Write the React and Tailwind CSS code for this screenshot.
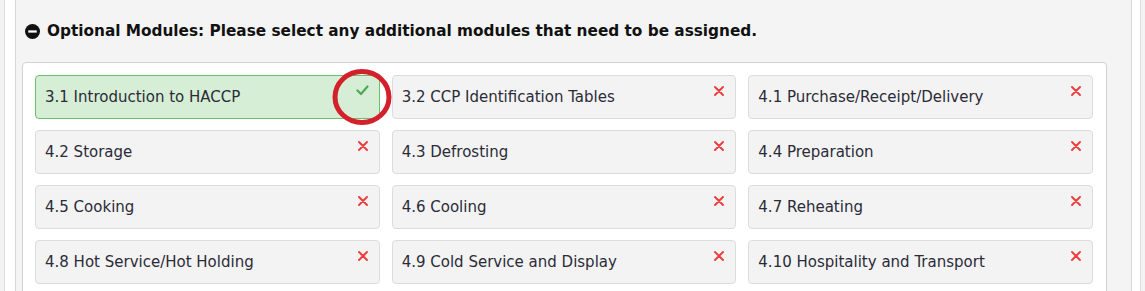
const modules = [
  { id: "3.1", label: "3.1 Introduction to HACCP", selected: true },
  { id: "3.2", label: "3.2 CCP Identification Tables" },
  { id: "4.1", label: "4.1 Purchase/Receipt/Delivery" },
  { id: "4.2", label: "4.2 Storage" },
  { id: "4.3", label: "4.3 Defrosting" },
  { id: "4.4", label: "4.4 Preparation" },
  { id: "4.5", label: "4.5 Cooking" },
  { id: "4.6", label: "4.6 Cooling" },
  { id: "4.7", label: "4.7 Reheating" },
  { id: "4.8", label: "4.8 Hot Service/Hot Holding" },
  { id: "4.9", label: "4.9 Cold Service and Display" },
  { id: "4.10", label: "4.10 Hospitality and Transport" },
];

function CrossIcon() {
  return (
    <svg width="10" height="10" viewBox="0 0 10 10" className="shrink-0 mt-[10px]">
      <path d="M1 1 L9 9 M9 1 L1 9" stroke="#ee3b3b" strokeWidth="1.9" strokeLinecap="round" />
    </svg>
  );
}

function CheckIcon() {
  return (
    <svg width="13" height="11" viewBox="0 0 13 11" className="shrink-0 mt-[9px] mr-[-1px]">
      <path d="M1.5 5.5 L5 9 L11.5 1.5" fill="none" stroke="#4caa52" strokeWidth="2.2" strokeLinecap="round" strokeLinejoin="round" />
    </svg>
  );
}

function ModuleTile({ label, selected }) {
  return (
    <div
      className={`relative flex justify-between h-[44px] pl-[9px] pr-[11px] rounded-[4px] border ${
        selected ? "bg-[#d6eed5] border-[#6cbf6a]" : "bg-[#f3f3f3] border-[#dcdcdc]"
      }`}
    >
      <span className="self-center text-[15px] text-[#2b2b38] leading-[18px]">{label}</span>
      {selected ? <CheckIcon /> : <CrossIcon />}
      {selected && (
        /* annotation ring drawn over the tile */
        <svg
          width="66"
          height="62"
          viewBox="0 0 66 62"
          className="absolute left-[293px] top-[-10px] pointer-events-none"
        >
          <ellipse cx="33" cy="31" rx="27" ry="25.5" fill="none" stroke="#d3202b" strokeWidth="5" />
        </svg>
      )}
    </div>
  );
}

export default function App() {
  return (
    <div className="flex h-[291px] overflow-hidden bg-white" style={{ fontFamily: '"DejaVu Sans", sans-serif' }}>
      <div className="w-[5px] bg-[#f3f3f3] border-r border-[#dedede]" />
      <div className="w-[10px]" />
      <div className="w-[1117px] bg-[#f4f4f4] border-x border-[#d8d8d8] pl-[6px] pr-[24px]">
        <div className="flex items-start gap-[7px] pt-[22px] pl-[3px] h-[62px]">
          <svg width="15" height="15" viewBox="0 0 16 16" className="mt-[2px] shrink-0">
            <circle cx="8" cy="8" r="8" fill="#111" />
            <rect x="3.5" y="6.8" width="9" height="2.4" fill="#fff" />
          </svg>
          <span className="text-[15.3px] font-bold text-[#111] leading-[19px]">
            Optional Modules: Please select any additional modules that need to be assigned.
          </span>
        </div>
        <div className="bg-white border border-[#d2d2d2] rounded-t-[4px] h-[240px] pt-[12px] pl-[12px] pr-[13px]">
          <div className="grid grid-cols-3 gap-x-[12px] gap-y-[11px]">
            {modules.map((m) => (
              <ModuleTile key={m.id} label={m.label} selected={m.selected} />
            ))}
          </div>
        </div>
      </div>
      <div className="w-[8px]" />
      <div className="flex-1 bg-[#f3f3f3] border-l border-[#dedede]" />
    </div>
  );
}
